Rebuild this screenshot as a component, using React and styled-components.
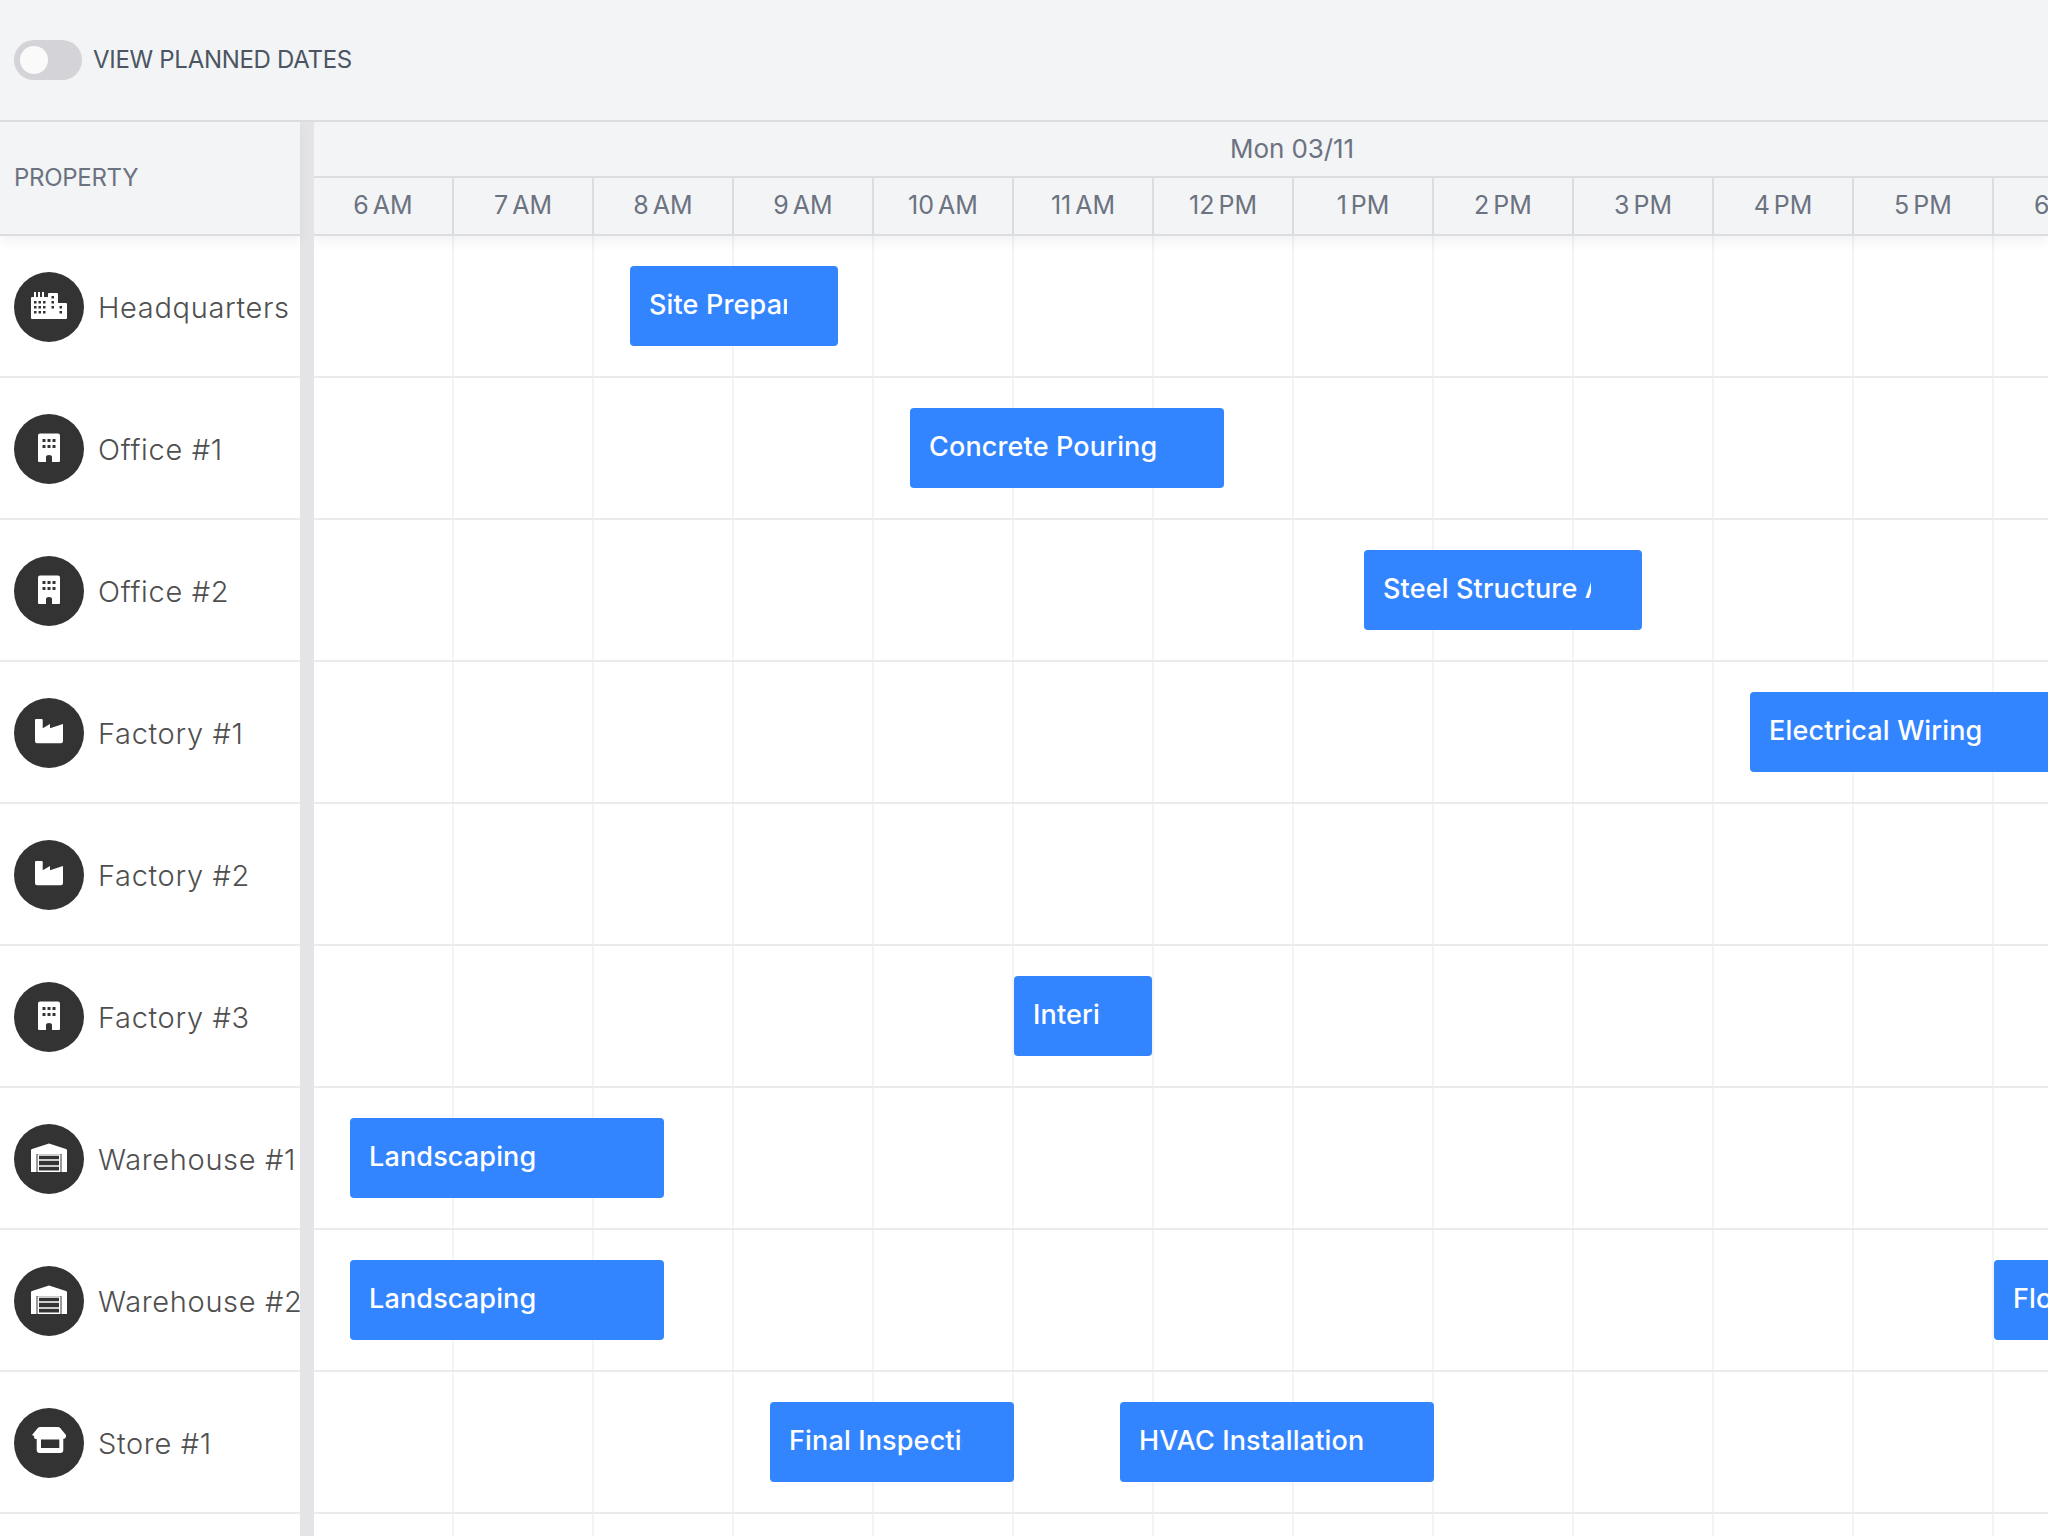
import React from "react";
import styled, { createGlobalStyle } from "styled-components";

const Global = createGlobalStyle`
  html, body { margin: 0; padding: 0; background: #fff; }
  body { width: 2048px; height: 1536px; overflow: hidden; font-family: "Inter", "Liberation Sans", sans-serif; }
  #root { width: 2048px; height: 1536px; overflow: hidden; }
`;

const Page = styled.div`
  width: 2048px;
  height: 1536px;
  display: flex;
  flex-direction: column;
  overflow: hidden;
`;
const Toolbar = styled.div`
  flex: 0 0 122px;
  box-sizing: border-box;
  display: flex;
  align-items: center;
  gap: 11px;
  padding: 0 14px;
  background: #f3f4f6;
  border-bottom: 2px solid #dcdde0;
`;
const Switch = styled.div`
  width: 68px;
  height: 40px;
  border-radius: 20px;
  background: #d4d4d8;
  box-sizing: border-box;
  padding: 6px;
`;
const Knob = styled.div`
  width: 28px;
  height: 28px;
  border-radius: 50%;
  background: #fafafa;
`;
const ToolbarLabel = styled.span`
  font-size: 24px;
  color: #4b5563;
  letter-spacing: -0.3px;
  margin-bottom: 2px;
`;
const Grid = styled.div`
  flex: 1;
  display: grid;
  grid-template-columns: 300px 14px 1fr;
  min-height: 0;
`;
const Side = styled.div`
  display: flex;
  flex-direction: column;
  min-width: 0;
`;
const SideHead = styled.div`
  flex: 0 0 114px;
  box-sizing: border-box;
  display: flex;
  align-items: center;
  padding: 0 14px 2px;
  background: #f3f4f6;
  border-bottom: 2px solid #dcdde0;
  font-size: 24px;
  letter-spacing: -0.3px;
  color: #6b7280;
  position: relative;
  box-shadow: 0 6px 12px rgba(0, 0, 0, 0.05);
  z-index: 2;
`;
const SideRow = styled.div`
  flex: 0 0 142px;
  box-sizing: border-box;
  display: flex;
  align-items: center;
  gap: 14px;
  padding: 2px 0 0 14px;
  border-bottom: 2px solid #eaebec;
  overflow: hidden;
`;
const Avatar = styled.div`
  flex: 0 0 70px;
  height: 70px;
  border-radius: 50%;
  background: #333;
  display: flex;
  align-items: center;
  justify-content: center;
`;
const RowName = styled.span`
  font-family: "Inter", "Liberation Sans", sans-serif;
  font-size: 29px;
  font-weight: 300;
  color: #4f4f4f;
  white-space: nowrap;
  letter-spacing: 0.65px;
`;
const Divider = styled.div`
  background: #e4e4e7;
`;
const Timeline = styled.div`
  display: flex;
  flex-direction: column;
  min-width: 0;
  overflow: hidden;
  position: relative;
`;
const Head = styled.div`
  flex: 0 0 114px;
  display: flex;
  flex-direction: column;
  background: #f3f4f6;
  border-bottom: 2px solid #dcdde0;
  box-sizing: border-box;
  box-shadow: 0 6px 12px rgba(0, 0, 0, 0.05);
  position: relative;
  z-index: 2;
`;
const DateRow = styled.div`
  flex: 0 0 56px;
  box-sizing: border-box;
  width: 1960px;
  display: flex;
  align-items: center;
  justify-content: center;
  font-size: 26px;
  letter-spacing: -0.1px;
  color: #6b7280;
  border-bottom: 2px solid #dcdde0;
  padding: 0 4px 2px 0;
`;
const HourRow = styled.div`
  flex: 1;
  display: flex;
`;
const Hour = styled.div`
  flex: 0 0 140px;
  box-sizing: border-box;
  display: flex;
  align-items: center;
  justify-content: center;
  font-size: 25px;
  color: #6b7280;
  border-right: 2px solid #dcdde0;
  word-spacing: -3px;
  white-space: nowrap;
  padding-bottom: 2px;
`;
const Body = styled.div`
  flex: 1;
  display: flex;
  flex-direction: column;
  min-height: 0;
  background-image: repeating-linear-gradient(
    to right,
    transparent 0,
    transparent 138px,
    #f3f4f5 138px,
    #f3f4f5 140px
  );
`;
const LaneRow = styled.div`
  flex: 0 0 142px;
  box-sizing: border-box;
  border-bottom: 2px solid #eaebec;
  position: relative;
`;
const Bar = styled.div`
  position: absolute;
  top: 30px;
  height: 80px;
  box-sizing: border-box;
  background: #3385ff;
  border-radius: 4px;
  padding: 0 51px 4px 19px;
  display: flex;
  align-items: center;
  color: #fff;
`;
const BarText = styled.span`
  display: block;
  overflow: hidden;
  white-space: nowrap;
  font-size: 27px;
  font-weight: 500;
  letter-spacing: 0.15px;
`;

const P = { fill: "#fff" };
const Icon = ({ children }) => (
  <svg width="38" height="38" viewBox="0 0 38 38" aria-hidden="true">{children}</svg>
);

const Corporate = () => (
  <Icon>
    <path {...P} fillRule="evenodd" d="M1 10q0-1 1-1h2V4h2v5h2V4h2v5h2V4h2v5h4V6q0-1 1-1h8q1 0 1 1v9h8q1 0 1 1v14q0 1-1 1H2q-1 0-1-1zM4 13v2.500h2.500V13zM8.500 13v2.500H11V13zM13 13v2.500h2.500V13zM4 18v2.500h2.500V18zM8.500 18v2.500H11V18zM13 18v2.500h2.500V18zM4 23v2.500h2.500V23zM8.500 23v2.500H11V23zM13 23v2.500h2.500V23zM21.500 8v2.500H24V8zM21.500 13v2.500H24V13zM21.500 18v2.500H24V18zM29.500 18v2.500H32V18zM29.500 23v2.500H32V23z" />
  </Icon>
);
const Office = () => (
  <Icon>
    <path {...P} fillRule="evenodd" d="M10 3.500q-2 0-2 2V31q0 1 1 1h7v-5q0-2 3-2t3 2v5h7q1 0 1-1V5.500q0-2-2-2zM12.500 9h3v3h-3zM17.500 9h3v3h-3zM22.500 9h3v3h-3zM12.500 15h3v3h-3zM17.500 15h3v3h-3zM22.500 15h3v3h-3z" />
  </Icon>
);
const Factory = () => (
  <Icon>
    <path {...P} d="M5 6q0-1 1-1h5.700q1 0 1 1v8.300L20 10v4.300L33 10v17.300q0 2-2 2H7q-2 0-2-2z" />
  </Icon>
);
const Warehouse = () => (
  <Icon>
    <path {...P} fillRule="evenodd" d="M19 3.500L36 9q1 .4 1 1.500V32h-5.500V14h-25v18H1V10.500Q1 9.400 2 9z" />
    <path fill="none" stroke="#fff" strokeWidth="1.500" d="M8.250 32V15h21.500v17M8.250 20h21.500M8.250 26h21.500M8.250 31.250h21.500" />
  </Icon>
);
const Store = () => (
  <Icon>
    <path {...P} fillRule="evenodd" d="M6.700 13H33.300V26q0 3-3 3H9.700q-3 0-3-3zM11 15.500V24H29.300V15.500z" />
    <path {...P} d="M2 11L7 5q1-2 3-2h18q2 0 3 2l5 6v1q0 3-3.500 3-2 0-3-1.500-1 1.500-3.500 1.500t-3.500-1.500q-1 1.500-3.500 1.500t-3.500-1.500q-1 1.500-3.500 1.500t-3.500-1.500q-1 1.500-3 1.500Q4 15 4 12z" />
  </Icon>
);

const hours = ["6 AM", "7 AM", "8 AM", "9 AM", "10 AM", "11 AM", "12 PM", "1 PM", "2 PM", "3 PM", "4 PM", "5 PM", "6 PM", "7 PM"];

const rows = [
  { name: "Headquarters", icon: Corporate, bars: [{ t: "Site Preparation", l: 316, w: 208 }] },
  { name: "Office #1", icon: Office, bars: [{ t: "Concrete Pouring", l: 596, w: 314 }] },
  { name: "Office #2", icon: Office, bars: [{ t: "Steel Structure Assembly", l: 1050, w: 278 }] },
  { name: "Factory #1", icon: Factory, bars: [{ t: "Electrical Wiring", l: 1436, w: 314 }] },
  { name: "Factory #2", icon: Factory, bars: [] },
  { name: "Factory #3", icon: Office, bars: [{ t: "Interior Finishing", l: 700, w: 138 }] },
  { name: "Warehouse #1", icon: Warehouse, bars: [{ t: "Landscaping", l: 36, w: 314 }] },
  { name: "Warehouse #2", icon: Warehouse, bars: [{ t: "Landscaping", l: 36, w: 314 }, { t: "Flooring", l: 1680, w: 314 }] },
  { name: "Store #1", icon: Store, bars: [{ t: "Final Inspection", l: 456, w: 244 }, { t: "HVAC Installation", l: 806, w: 314 }] },
];

export default function App() {
  return (
    <Page>
      <Global />
      <Toolbar>
        <Switch><Knob /></Switch>
        <ToolbarLabel>VIEW PLANNED DATES</ToolbarLabel>
      </Toolbar>
      <Grid>
        <Side>
          <SideHead>PROPERTY</SideHead>
          {rows.map((r) => (
            <SideRow key={r.name}>
              <Avatar><r.icon /></Avatar>
              <RowName>{r.name}</RowName>
            </SideRow>
          ))}
        </Side>
        <Divider />
        <Timeline>
          <Head>
            <DateRow>Mon 03/11</DateRow>
            <HourRow>
              {hours.map((h) => <Hour key={h}>{h}</Hour>)}
            </HourRow>
          </Head>
          <Body>
            {rows.map((r) => (
              <LaneRow key={r.name}>
                {r.bars.map((b) => (
                  <Bar key={b.t} style={{ left: b.l, width: b.w }}>
                    <BarText>{b.t}</BarText>
                  </Bar>
                ))}
              </LaneRow>
            ))}
          </Body>
        </Timeline>
      </Grid>
    </Page>
  );
}
